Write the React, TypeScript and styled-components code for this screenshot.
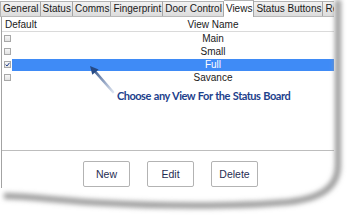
import React from "react";
import styled, { createGlobalStyle } from "styled-components";

const GlobalStyle = createGlobalStyle`
  html, body { margin: 0; padding: 0; background: #fff; }
  body { font-family: "Liberation Sans", Arial, sans-serif; }
`;

const Frame = styled.div`
  position: relative;
  width: 350px;
  height: 215px;
  overflow: hidden;
  background: #fff;
`;

const TabStrip = styled.div`
  display: flex;
  align-items: flex-end;
  height: 17px;
  box-sizing: border-box;
  border-bottom: 1px solid #b9b9b9;
`;

const Tab = styled.div<{ $active?: boolean }>`
  box-sizing: border-box;
  height: ${(p) => (p.$active ? 17 : 15)}px;
  margin-bottom: ${(p) => (p.$active ? -1 : 0)}px;
  padding: 0 1px 1px 2px;
  display: flex;
  align-items: center;
  font-size: 10px;
  color: #1a1a1a;
  white-space: nowrap;
  background: ${(p) => (p.$active ? "#fff" : "linear-gradient(#f2f2f2, #dcdcdc)")};
  border-top: 1px solid #b4b4b4;
  border-right: 1px solid #a6a6a6;
  &:first-child { border-left: 1px solid #b4b4b4; }
`;

const Panel = styled.div`
  margin-left: 1px;
  border-left: 1px solid #a3a3a3;
  height: 171px;
  display: flex;
  flex-direction: column;
`;

const Grid = styled.div`
  position: relative;
  height: 134px;
  box-sizing: border-box;
  border-bottom: 1px solid #bdbdbd;
  display: flex;
  flex-direction: column;
`;

const HeaderRow = styled.div`
  display: grid;
  grid-template-columns: 74px 1fr;
  height: 14px;
  align-items: center;
  border-bottom: 1px solid #dadada;
  font-size: 10px;
  color: #1a1a1a;
`;

const HeaderCell = styled.div<{ $center?: boolean }>`
  padding-left: ${(p) => (p.$center ? 0 : 3)}px;
  text-align: ${(p) => (p.$center ? "center" : "left")};
`;

const Row = styled.div`
  display: grid;
  grid-template-columns: 10px 1fr;
  height: 13px;
  align-items: center;
`;

const Check = styled.div`
  box-sizing: border-box;
  width: 7px;
  height: 7px;
  margin-left: 2px;
  border: 1px solid #a8a8a8;
  background: linear-gradient(#f7f7f7, #e2e2e2);
  display: flex;
  align-items: center;
  justify-content: center;
`;

const NameCell = styled.div<{ $selected?: boolean }>`
  height: 12px;
  line-height: 12px;
  padding-left: 64px;
  text-align: center;
  font-size: 10px;
  color: ${(p) => (p.$selected ? "#fff" : "#1a1a1a")};
  background: ${(p) => (p.$selected ? "#3f8bf6" : "transparent")};
`;

const Callout = styled.div`
  position: absolute;
  left: 115px;
  top: 72px;
  font-family: "Lato", "Liberation Sans", sans-serif;
  font-weight: 700;
  font-size: 11px;
  letter-spacing: -0.5px;
  word-spacing: 0.8px;
  color: #1d418c;
  white-space: nowrap;
`;

const ArrowSvg = styled.svg`
  position: absolute;
  left: 0;
  top: 0;
  pointer-events: none;
`;

const ButtonBar = styled.div`
  display: flex;
  gap: 17px;
  padding: 10px 0 0 81px;
`;

const Button = styled.button`
  box-sizing: border-box;
  width: 47px;
  height: 26px;
  padding: 0;
  border: 1px solid #b3b3b3;
  border-radius: 2px;
  background: #fff;
  font-family: "Liberation Sans", Arial, sans-serif;
  font-size: 10.5px;
  color: #1f2d52;
`;

const PaperEdge = styled.svg`
  position: absolute;
  left: 0;
  top: 0;
  pointer-events: none;
`;

const tabs = ["General", "Status", "Comms", "Fingerprint", "Door Control", "Views", "Status Buttons", "Re"];
const views = [
  { name: "Main", checked: false },
  { name: "Small", checked: false },
  { name: "Full", checked: true },
  { name: "Savance", checked: false },
];

const edge =
  "M 334,-5 L 334,160 C 334,182 318,193 285,197 C 230,202 150,201 100,198 C 60,196 25,191 0,191";

export default function App() {
  return (
    <>
      <GlobalStyle />
      <Frame>
        <TabStrip>
          {tabs.map((t) => (
            <Tab key={t} $active={t === "Views"}>
              {t}
            </Tab>
          ))}
        </TabStrip>
        <Panel>
          <Grid>
            <HeaderRow>
              <HeaderCell>Default</HeaderCell>
              <HeaderCell $center>View Name</HeaderCell>
            </HeaderRow>
            {views.map((v) => (
              <Row key={v.name}>
                <Check>
                  {v.checked && (
                    <svg width="5" height="5" viewBox="0 0 5 5">
                      <path d="M0.6 2.6 L2 4 L4.5 0.8" fill="none" stroke="#1d3c8a" strokeWidth="1" />
                    </svg>
                  )}
                </Check>
                <NameCell $selected={v.checked}>{v.name}</NameCell>
              </Row>
            ))}
            <ArrowSvg width="140" height="90">
              <defs>
                <linearGradient id="arrowGrad" gradientUnits="userSpaceOnUse" x1="88" y1="49" x2="112" y2="76">
                  <stop offset="0" stopColor="#23457f" />
                  <stop offset="1" stopColor="#e2e8f3" />
                </linearGradient>
              </defs>
              <path d="M93.4 54.9 L111 75" stroke="url(#arrowGrad)" strokeWidth="2.6" strokeLinecap="round" />
              <path d="M88 49 L96.6 52.4 L90.3 57.8 Z" fill="#264a86" />
            </ArrowSvg>
            <Callout>Choose any View For the Status Board</Callout>
          </Grid>
          <ButtonBar>
            <Button>New</Button>
            <Button>Edit</Button>
            <Button>Delete</Button>
          </ButtonBar>
        </Panel>
        <PaperEdge width="350" height="215">
          <defs>
            <filter id="edgeBlur" x="-20%" y="-20%" width="140%" height="140%">
              <feGaussianBlur stdDeviation="2.6" />
            </filter>
          </defs>
          <path d={edge + " L -5,191 L -5,220 L 355,220 L 355,-5 Z"} fill="#fff" />
          <path d={edge} transform="translate(4,5)" fill="none" stroke="#9a9a9a" strokeWidth="6" filter="url(#edgeBlur)" />
        </PaperEdge>
      </Frame>
    </>
  );
}
